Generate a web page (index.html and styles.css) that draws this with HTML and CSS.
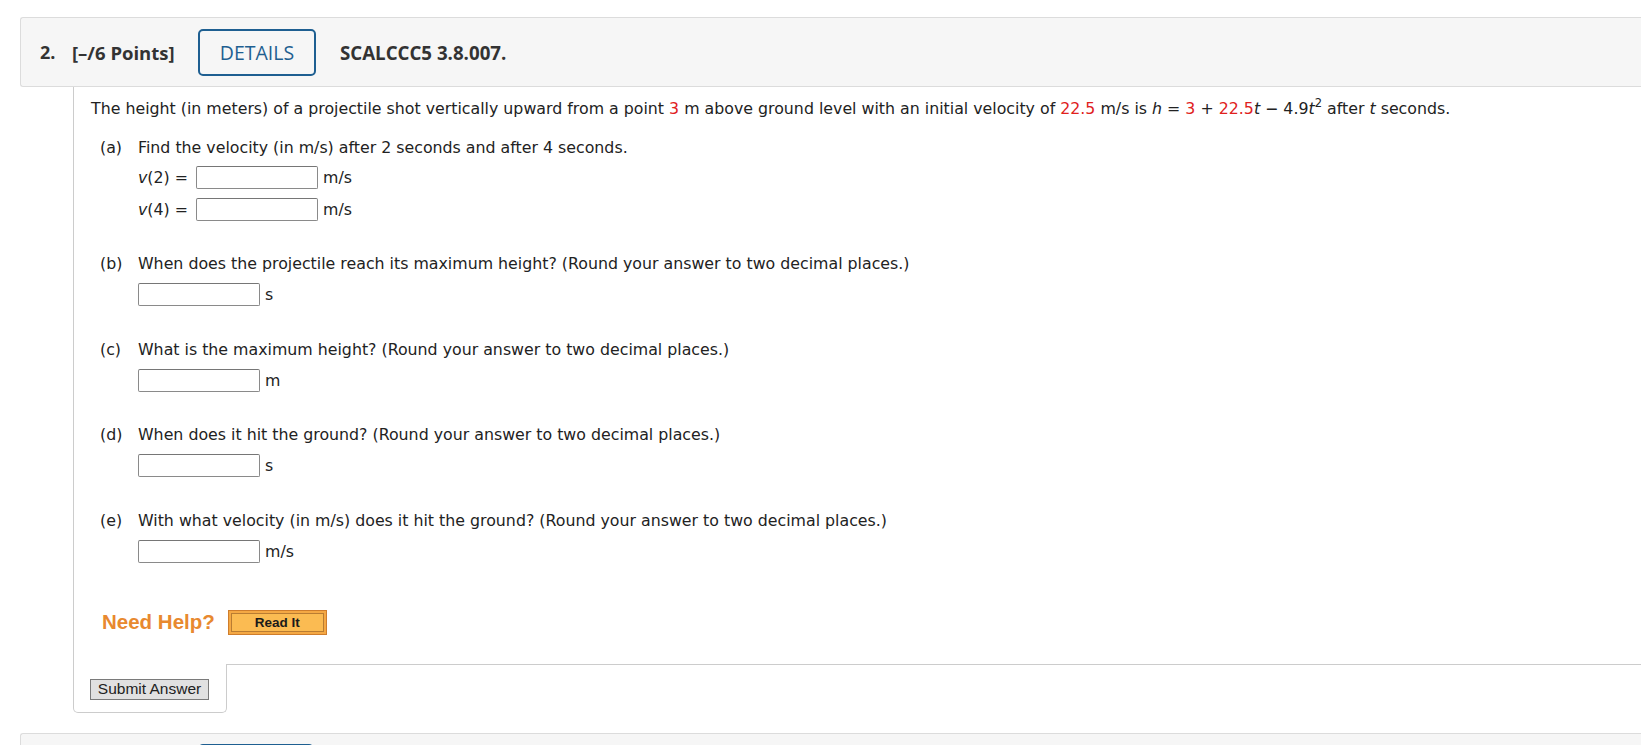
FILE: index.html
```html
<!DOCTYPE html>
<html>
<head>
<meta charset="utf-8">
<link rel="stylesheet" href="styles.css">
</head>
<body>
<div class="question">
  <div class="qhead">
    <span class="qnum">2.</span>
    <span class="qpts">[–/6 Points]</span>
    <span class="details">DETAILS</span>
    <span class="qcode">SCALCCC5 3.8.007.</span>
  </div>
  <div class="qbody">
    <p class="intro">The height (in meters) of a projectile shot vertically upward from a point <span class="red">3</span> m above ground level with an initial velocity of <span class="red">22.5</span> m/s is <i>h</i> = <span class="red">3</span> + <span class="red">22.5</span><i>t</i> − 4.9<i>t</i><sup>2</sup> after <i>t</i> seconds.</p>

    <div class="part part-a">
      <div class="prow"><span class="plabel">(a)</span><span>Find the velocity (in m/s) after 2 seconds and after 4 seconds.</span></div>
      <div class="arow"><span class="vlab"><i>v</i>(2) =</span><span class="box"></span><span class="unit">m/s</span></div>
      <div class="arow"><span class="vlab"><i>v</i>(4) =</span><span class="box"></span><span class="unit">m/s</span></div>
    </div>

    <div class="part">
      <div class="prow"><span class="plabel">(b)</span><span>When does the projectile reach its maximum height? (Round your answer to two decimal places.)</span></div>
      <div class="arow"><span class="box"></span><span class="unit">s</span></div>
    </div>

    <div class="part">
      <div class="prow"><span class="plabel">(c)</span><span>What is the maximum height? (Round your answer to two decimal places.)</span></div>
      <div class="arow"><span class="box"></span><span class="unit">m</span></div>
    </div>

    <div class="part">
      <div class="prow"><span class="plabel">(d)</span><span>When does it hit the ground? (Round your answer to two decimal places.)</span></div>
      <div class="arow"><span class="box"></span><span class="unit">s</span></div>
    </div>

    <div class="part">
      <div class="prow"><span class="plabel">(e)</span><span>With what velocity (in m/s) does it hit the ground? (Round your answer to two decimal places.)</span></div>
      <div class="arow"><span class="box"></span><span class="unit">m/s</span></div>
    </div>

    <div class="help">
      <span class="needhelp">Need Help?</span>
      <span class="readit"><span class="readit-in">Read It</span></span>
    </div>
  </div>
  <div class="qfoot">
    <div class="submit-tab"><span class="submit">Submit Answer</span></div>
    <div class="foot-rest"></div>
  </div>
</div>
<div class="question next">
  <div class="qhead">
    <span class="qnum"></span>
    <span class="qpts"></span>
    <span class="details"></span>
  </div>
</div>
</body>
</html>
```
FILE: styles.css
```css
html, body {
  margin: 0;
  padding: 0;
  background: #fff;
}
body {
  font-family: "DejaVu Sans", Verdana, sans-serif;
  color: #222;
  overflow: hidden;
  height: 745px;
}
.question {
  margin: 17px 0 0 20px;
}
.qhead {
  height: 70px;
  box-sizing: border-box;
  background: #f6f6f6;
  border: 1px solid #dcdcdc;
  border-right: none;
  border-radius: 3px 0 0 3px;
  display: flex;
  align-items: center;
  padding-left: 19px;
  font-family: "Open Sans", sans-serif;
  font-weight: 700;
  font-size: 18px;
  color: #333;
}
.qnum {
  width: 32px;
  flex: none;
}
.qpts {
  width: 126px;
  flex: none;
  font-size: 18.5px;
}
.details {
  box-sizing: border-box;
  flex: none;
  width: 118px;
  height: 47px;
  border: 2px solid #1e5f91;
  border-radius: 5px;
  color: #1e5f91;
  font-weight: 400;
  font-size: 19.5px;
  display: flex;
  align-items: center;
  justify-content: center;
  margin-right: 24px;
}
.qcode {
  font-size: 18.7px;
}
.qbody {
  margin-left: 53px;
  border-left: 1px solid #ccc;
  padding: 10px 0 29px 17px;
  font-size: 15.8px;
}
.intro {
  margin: 0;
  line-height: 24px;
}
.red {
  color: #e0211d;
}
sup {
  font-size: 11.5px;
  line-height: 0;
  vertical-align: 7px;
}
.part {
  margin-left: 9px;
  margin-top: 31.4px;
}
.part-a {
  margin-top: 15px;
}
.prow {
  display: flex;
  line-height: 24px;
}
.plabel {
  width: 38px;
  flex: none;
}
.arow {
  display: flex;
  align-items: center;
  margin-left: 38px;
  margin-top: 7px;
  height: 23px;
}
.part-a .arow {
  margin-top: 6px;
}
.part-a .arow + .arow {
  margin-top: 9px;
}
.vlab {
  width: 58px;
  flex: none;
}
.box {
  box-sizing: border-box;
  flex: none;
  width: 122px;
  height: 23px;
  border: 1px solid #8a8a8a;
  border-top-color: #767676;
  border-radius: 2px;
  background: #fff;
}
.unit {
  margin-left: 5px;
}
.help {
  display: flex;
  align-items: center;
  margin-top: 47px;
  margin-left: 11px;
}
.needhelp {
  font-family: "Liberation Sans", Arial, sans-serif;
  font-weight: bold;
  font-size: 20.5px;
  color: #e8892f;
  margin-right: 13px;
}
.readit {
  box-sizing: border-box;
  width: 99px;
  height: 25px;
  background: #f4a844;
  border: 1px solid #cf7d2c;
  padding: 2px;
  display: flex;
}
.readit-in {
  flex: 1;
  border: 1px solid #b97c32;
  background: #fbbb52;
  font-family: "Liberation Sans", Arial, sans-serif;
  font-weight: bold;
  font-size: 13.5px;
  color: #1a1a1a;
  display: flex;
  align-items: center;
  justify-content: center;
}
.qfoot {
  display: flex;
  margin-left: 53px;
}
.submit-tab {
  box-sizing: border-box;
  width: 154px;
  height: 49px;
  border: 1px solid #ccc;
  border-top: none;
  border-radius: 0 0 5px 5px;
  padding: 15px 0 0 16px;
}
.submit {
  display: inline-flex;
  align-items: center;
  justify-content: center;
  box-sizing: border-box;
  width: 119px;
  height: 21px;
  background: #e1e1e1;
  border: 1px solid #7a7a7a;
  font-family: "Liberation Sans", Arial, sans-serif;
  font-size: 15.5px;
  color: #222;
}
.foot-rest {
  flex: 1;
  border-top: 1px solid #ccc;
}
.next {
  margin-top: 20px;
}
.next .qhead {
  align-items: flex-start;
  padding-top: 10px;
}
.next .details {
  height: 47px;
  width: 116px;
}
```
